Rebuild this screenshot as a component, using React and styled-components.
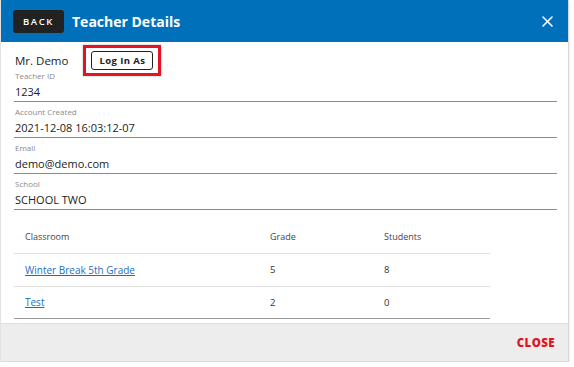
import React from "react";
import styled, { createGlobalStyle } from "styled-components";

const Global = createGlobalStyle`
  html, body { margin: 0; padding: 0; background: #fff; }
  body { font-family: "Open Sans", Inter, sans-serif; color: #222; }
`;

const Dialog = styled.div`
  width: 569px;
  height: 362px;
  box-sizing: border-box;
  display: flex;
  flex-direction: column;
  border-left: 1px solid #e2e2e2;
  border-right: 1px solid #d8d8d8;
  border-bottom: 1px solid #dcdcdc;
  box-shadow: 0 1px 3px rgba(0,0,0,0.12);
`;

const Header = styled.div`
  height: 42px;
  background: #0070ba;
  display: flex;
  align-items: center;
  padding: 0 14px 0 12px;
  flex-shrink: 0;
`;

const BackButton = styled.button`
  background: #222;
  color: #fff;
  border: none;
  border-radius: 3px;
  width: 51px;
  height: 23px;
  font-family: "Open Sans", sans-serif;
  font-size: 9.5px;
  font-weight: 600;
  letter-spacing: 1.6px;
  padding: 0;
  margin-right: 8px;
`;

const Title = styled.h1`
  margin: 0;
  color: #fff;
  font-size: 14px;
  font-weight: 700;
  flex: 1;
`;

const CloseX = styled.button`
  background: none;
  border: none;
  padding: 0;
  width: 14px;
  height: 14px;
  display: flex;
  align-items: center;
  justify-content: center;
`;

const Body = styled.div`
  flex: 1;
  padding: 8px 11px 0 13px;
  overflow: hidden;
`;

const NameRow = styled.div`
  display: flex;
  align-items: center;
  height: 20px;
`;

const Name = styled.span`
  font-size: 11.5px;
  margin-right: 15px;
  margin-left: 1px;
`;

const Highlight = styled.div`
  border: 3px solid #e3141f;
  padding: 3px 5px;
  display: flex;
  box-shadow: 0 0 2px rgba(0,0,0,0.3);
`;

const LoginButton = styled.button`
  background: #fff;
  border: 1px solid #222;
  border-radius: 3px;
  font-family: "Open Sans", sans-serif;
  font-size: 9.5px;
  font-weight: 700;
  letter-spacing: 0.4px;
  height: 19px;
  width: 62px;
  padding: 0;
  color: #222;
`;

const Field = styled.div`
  border-bottom: 1px solid #8a8a8a;
  padding-top: ${p => (p.$first ? "1px" : "5px")};
  padding-bottom: 1px;
`;

const Label = styled.div`
  font-size: 8px;
  color: #8a8a8a;
  line-height: 10px;
  padding-left: 1px;
`;

const Value = styled.div`
  font-size: 11px;
  line-height: 16px;
  margin-top: 3px;
  padding-left: 1px;
`;

const Table = styled.table`
  width: 476px;
  border-collapse: collapse;
  margin-top: 11px;
  & th, & td { text-align: left; padding: 0 0 0 11px; }
`;

const HeadRow = styled.tr`
  height: 32px;
  & th { font-weight: 500; color: #444; font-size: 9px; vertical-align: middle; }
`;

const Row = styled.tr`
  height: 33px;
  border-top: 1px solid #e0e0e0;
  &:last-child { border-bottom: 1px solid #9a9a9a; height: 32px; }
  & td { color: #333; font-size: 9.5px; }
`;

const Link = styled.a`
  color: #1a6fc0;
  text-decoration: underline;
  font-size: 10px;
`;

const Footer = styled.div`
  height: 37px;
  background: #ededed;
  border-top: 1px solid #e0e0e0;
  display: flex;
  align-items: center;
  justify-content: flex-end;
  padding-right: 13px;
  flex-shrink: 0;
`;

const CloseText = styled.button`
  background: none;
  border: none;
  color: #e3141f;
  font-family: "Open Sans", sans-serif;
  font-weight: 800;
  font-size: 11.5px;
  letter-spacing: 0.4px;
  padding: 0;
`;

const rows = [
  { name: "Winter Break 5th Grade", grade: 5, students: 8 },
  { name: "Test", grade: 2, students: 0 },
];

export default function App() {
  return (
    <>
      <Global />
      <Dialog>
        <Header>
          <BackButton>BACK</BackButton>
          <Title>Teacher Details</Title>
          <CloseX aria-label="close">
            <svg width="11" height="11" viewBox="0 0 11 11">
              <path d="M1 1 L10 10 M10 1 L1 10" stroke="#fff" strokeWidth="1.6" strokeLinecap="round" />
            </svg>
          </CloseX>
        </Header>
        <Body>
          <NameRow>
            <Name>Mr. Demo</Name>
            <Highlight>
              <LoginButton>Log In As</LoginButton>
            </Highlight>
          </NameRow>
          <Field $first>
            <Label>Teacher ID</Label>
            <Value>1234</Value>
          </Field>
          <Field>
            <Label>Account Created</Label>
            <Value>2021-12-08 16:03:12-07</Value>
          </Field>
          <Field>
            <Label>Email</Label>
            <Value>demo@demo.com</Value>
          </Field>
          <Field>
            <Label>School</Label>
            <Value>SCHOOL TWO</Value>
          </Field>
          <Table>
            <colgroup>
              <col style={{ width: 245 }} />
              <col style={{ width: 114 }} />
              <col />
            </colgroup>
            <thead>
              <HeadRow>
                <th>Classroom</th>
                <th>Grade</th>
                <th>Students</th>
              </HeadRow>
            </thead>
            <tbody>
              {rows.map(r => (
                <Row key={r.name}>
                  <td><Link href="#">{r.name}</Link></td>
                  <td>{r.grade}</td>
                  <td>{r.students}</td>
                </Row>
              ))}
            </tbody>
          </Table>
        </Body>
        <Footer>
          <CloseText>CLOSE</CloseText>
        </Footer>
      </Dialog>
    </>
  );
}
